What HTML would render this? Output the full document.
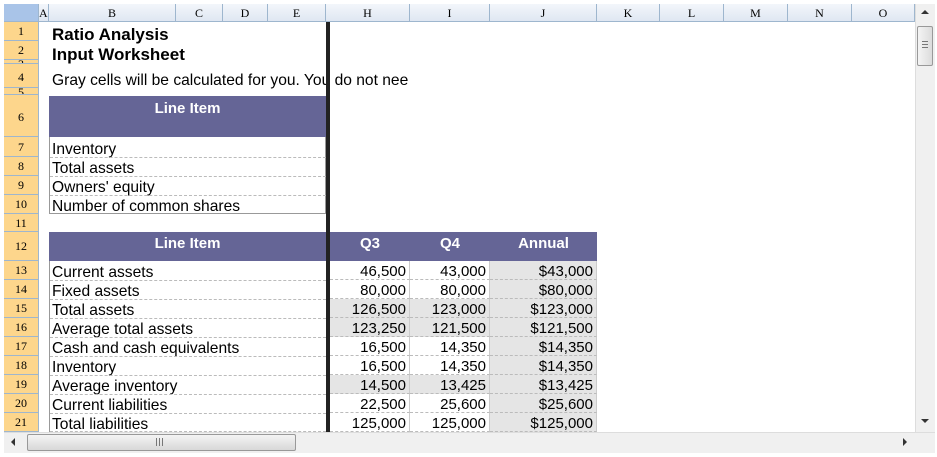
<!DOCTYPE html>
<html><head><style>
body{margin:0;width:937px;height:457px;overflow:hidden;background:#fff;font-family:"Liberation Sans",sans-serif;position:relative}
div{position:absolute;box-sizing:border-box}
.ch{top:4px;height:18px;background:linear-gradient(#f3f6fb,#dfe7f2);border-right:1px solid #9eb6ce;border-bottom:1px solid #9eb6ce;font:12px "Liberation Serif",serif;text-align:center;line-height:18px;color:#000}
.rh{left:4px;width:35px;background:#fdd68c;border-bottom:1px solid #9eb6ce;border-right:1px solid #9eb6ce;font:12px "Liberation Serif",serif;text-align:center;color:#000;overflow:hidden}
.t{font-size:15.6px;color:#000;white-space:nowrap;line-height:19px}
.dl{height:0;border-top:1px dashed #bbb}
.n{font-size:15px;text-align:right;line-height:19px;padding-right:3px;border-bottom:1px dashed #bbb;border-right:1px solid #ccc}
.hd{background:#656596;color:#fff;font-weight:bold;font-size:15px;text-align:center}
</style></head><body>
<div style="left:4px;top:4px;width:35px;height:18px;background:#a9c4e8;border-right:1px solid #9eb6ce;border-bottom:1px solid #9eb6ce"></div>
<div class="ch" style="left:39px;width:10px;text-align:left">A</div>
<div class="ch" style="left:49px;width:127px">B</div>
<div class="ch" style="left:176px;width:47px">C</div>
<div class="ch" style="left:223px;width:45px">D</div>
<div class="ch" style="left:268px;width:58px">E</div>
<div class="ch" style="left:326px;width:84px">H</div>
<div class="ch" style="left:410px;width:80px">I</div>
<div class="ch" style="left:490px;width:107px">J</div>
<div class="ch" style="left:597px;width:63px">K</div>
<div class="ch" style="left:660px;width:64px">L</div>
<div class="ch" style="left:724px;width:64px">M</div>
<div class="ch" style="left:788px;width:64px">N</div>
<div class="ch" style="left:852px;width:63px">O</div>

<div class="rh" style="top:22px;height:19px;line-height:19px">1</div>
<div class="rh" style="top:41px;height:19px;line-height:19px">2</div>
<div class="rh" style="top:60px;height:4px;line-height:8px">3</div>
<div class="rh" style="top:64px;height:24px;line-height:26px">4</div>
<div class="rh" style="top:88px;height:7px;line-height:8px">5</div>
<div class="rh" style="top:95px;height:42px;line-height:44px">6</div>
<div class="rh" style="top:137px;height:20px;line-height:20px">7</div>
<div class="rh" style="top:157px;height:19px;line-height:19px">8</div>
<div class="rh" style="top:176px;height:19px;line-height:19px">9</div>
<div class="rh" style="top:195px;height:19px;line-height:19px">10</div>
<div class="rh" style="top:214px;height:18px;line-height:18px">11</div>
<div class="rh" style="top:232px;height:29px;line-height:29px">12</div>
<div class="rh" style="top:261px;height:19px;line-height:19px">13</div>
<div class="rh" style="top:280px;height:19px;line-height:19px">14</div>
<div class="rh" style="top:299px;height:19px;line-height:19px">15</div>
<div class="rh" style="top:318px;height:19px;line-height:19px">16</div>
<div class="rh" style="top:337px;height:19px;line-height:19px">17</div>
<div class="rh" style="top:356px;height:19px;line-height:19px">18</div>
<div class="rh" style="top:375px;height:19px;line-height:19px">19</div>
<div class="rh" style="top:394px;height:19px;line-height:19px">20</div>
<div class="rh" style="top:413px;height:19px;line-height:19px">21</div>

<div class="t" style="left:52px;top:25px;font-size:17px;font-weight:bold">Ratio Analysis</div>
<div class="t" style="left:52px;top:45px;font-size:17px;font-weight:bold">Input Worksheet</div>
<div class="t" style="left:52px;top:71px">Gray cells will be calculated for you. You do not nee</div>

<div class="hd" style="left:49px;top:96px;width:277px;height:41px;line-height:26px">Line Item</div>
<div style="left:49px;top:137px;width:1px;height:77px;background:#999"></div>
<div style="left:325px;top:137px;width:1px;height:77px;background:#999"></div>
<div class="t" style="left:52px;top:140px">Inventory</div>
<div class="t" style="left:52px;top:159px">Total assets</div>
<div class="t" style="left:52px;top:178px">Owners' equity</div>
<div class="t" style="left:52px;top:197px">Number of common shares</div>
<div class="dl" style="left:50px;top:157px;width:276px"></div>
<div class="dl" style="left:50px;top:176px;width:276px"></div>
<div class="dl" style="left:50px;top:195px;width:276px"></div>
<div style="left:49px;top:213px;width:277px;height:1px;background:#999"></div>

<div class="hd" style="left:49px;top:232px;width:277px;height:29px;line-height:24px">Line Item</div>
<div class="hd" style="left:330px;top:232px;width:267px;height:29px;line-height:24px">
<span style="position:absolute;left:0;width:80px">Q3</span><span style="position:absolute;left:80px;width:80px">Q4</span><span style="position:absolute;left:160px;width:107px">Annual</span></div>
<div style="left:49px;top:261px;width:1px;height:171px;background:#999"></div>

<div class="t" style="left:52px;top:263px">Current assets</div>
<div class="t" style="left:52px;top:282px">Fixed assets</div>
<div class="t" style="left:52px;top:301px">Total assets</div>
<div class="t" style="left:52px;top:320px">Average total assets</div>
<div class="t" style="left:52px;top:339px">Cash and cash equivalents</div>
<div class="t" style="left:52px;top:358px">Inventory</div>
<div class="t" style="left:52px;top:377px">Average inventory</div>
<div class="t" style="left:52px;top:396px">Current liabilities</div>
<div class="t" style="left:52px;top:415px">Total liabilities</div>
<div class="dl" style="left:50px;top:280px;width:276px"></div>
<div class="dl" style="left:50px;top:299px;width:276px"></div>
<div class="dl" style="left:50px;top:318px;width:276px"></div>
<div class="dl" style="left:50px;top:337px;width:276px"></div>
<div class="dl" style="left:50px;top:356px;width:276px"></div>
<div class="dl" style="left:50px;top:375px;width:276px"></div>
<div class="dl" style="left:50px;top:394px;width:276px"></div>
<div class="dl" style="left:50px;top:413px;width:276px"></div>
<div class="dl" style="left:50px;top:431px;width:276px"></div>

<div id="grid" style="left:330px;top:261px;width:267px;height:171px">
<div class="n" style="left:0;top:0;width:80px;height:19px;line-height:22px">46,500</div><div class="n" style="left:80px;top:0;width:80px;height:19px;line-height:22px">43,000</div><div class="n" style="left:160px;top:0;width:107px;height:19px;line-height:22px;background:#e5e5e5">$43,000</div>
<div class="n" style="left:0;top:19px;width:80px;height:19px;line-height:22px">80,000</div><div class="n" style="left:80px;top:19px;width:80px;height:19px;line-height:22px">80,000</div><div class="n" style="left:160px;top:19px;width:107px;height:19px;line-height:22px;background:#e5e5e5">$80,000</div>
<div class="n" style="left:0;top:38px;width:80px;height:19px;line-height:22px;background:#e5e5e5">126,500</div><div class="n" style="left:80px;top:38px;width:80px;height:19px;line-height:22px;background:#e5e5e5">123,000</div><div class="n" style="left:160px;top:38px;width:107px;height:19px;line-height:22px;background:#e5e5e5">$123,000</div>
<div class="n" style="left:0;top:57px;width:80px;height:19px;line-height:22px;background:#e5e5e5">123,250</div><div class="n" style="left:80px;top:57px;width:80px;height:19px;line-height:22px;background:#e5e5e5">121,500</div><div class="n" style="left:160px;top:57px;width:107px;height:19px;line-height:22px;background:#e5e5e5">$121,500</div>
<div class="n" style="left:0;top:76px;width:80px;height:19px;line-height:22px">16,500</div><div class="n" style="left:80px;top:76px;width:80px;height:19px;line-height:22px">14,350</div><div class="n" style="left:160px;top:76px;width:107px;height:19px;line-height:22px;background:#e5e5e5">$14,350</div>
<div class="n" style="left:0;top:95px;width:80px;height:19px;line-height:22px">16,500</div><div class="n" style="left:80px;top:95px;width:80px;height:19px;line-height:22px">14,350</div><div class="n" style="left:160px;top:95px;width:107px;height:19px;line-height:22px;background:#e5e5e5">$14,350</div>
<div class="n" style="left:0;top:114px;width:80px;height:19px;line-height:22px;background:#e5e5e5">14,500</div><div class="n" style="left:80px;top:114px;width:80px;height:19px;line-height:22px;background:#e5e5e5">13,425</div><div class="n" style="left:160px;top:114px;width:107px;height:19px;line-height:22px;background:#e5e5e5">$13,425</div>
<div class="n" style="left:0;top:133px;width:80px;height:19px;line-height:22px">22,500</div><div class="n" style="left:80px;top:133px;width:80px;height:19px;line-height:22px">25,600</div><div class="n" style="left:160px;top:133px;width:107px;height:19px;line-height:22px;background:#e5e5e5">$25,600</div>
<div class="n" style="left:0;top:152px;width:80px;height:19px;line-height:22px">125,000</div><div class="n" style="left:80px;top:152px;width:80px;height:19px;line-height:22px">125,000</div><div class="n" style="left:160px;top:152px;width:107px;height:19px;line-height:22px;background:#e5e5e5">$125,000</div>
</div>

<div style="left:326px;top:22px;width:4px;height:410px;background:#222"></div>

<div style="left:915px;top:4px;width:20px;height:428px;background:#f0f0f0;border-left:1px solid #ddd"></div>
<div style="left:921px;top:10px;width:0;height:0;border-left:4px solid transparent;border-right:4px solid transparent;border-bottom:4px solid #333"></div>
<div style="left:917px;top:26px;width:16px;height:40px;background:linear-gradient(90deg,#f4f4f4,#dcdcdc);border:1px solid #999;border-radius:2px"></div>
<div style="left:922px;top:41px;width:6px;height:7px;border-top:1px solid #777;border-bottom:1px solid #777"></div>
<div style="left:922px;top:44px;width:6px;height:1px;background:#777"></div>
<div style="left:921px;top:419px;width:0;height:0;border-left:4px solid transparent;border-right:4px solid transparent;border-top:4px solid #333"></div>
<div style="left:4px;top:432px;width:931px;height:21px;background:#f0f0f0;border-top:1px solid #ddd"></div>
<div style="left:11px;top:438px;width:0;height:0;border-top:4px solid transparent;border-bottom:4px solid transparent;border-right:4px solid #333"></div>
<div style="left:27px;top:434px;width:269px;height:17px;background:linear-gradient(#f4f4f4,#d8d8d8);border:1px solid #999;border-radius:2px"></div>
<div style="left:156px;top:438px;width:7px;height:8px;border-left:1px solid #777;border-right:1px solid #777"></div>
<div style="left:159px;top:438px;width:1px;height:8px;background:#777"></div>
<div style="left:903px;top:438px;width:0;height:0;border-top:4px solid transparent;border-bottom:4px solid transparent;border-left:4px solid #333"></div>
<div style="left:0;top:0;width:937px;height:4px;background:#fff"></div>
</body></html>
